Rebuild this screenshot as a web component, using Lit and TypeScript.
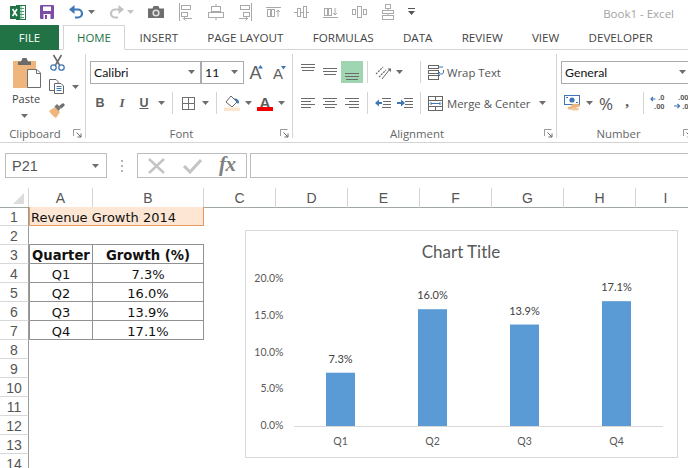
import { LitElement, html, css, svg } from "lit";
import { customElement } from "lit/decorators.js";

const ic = (w: number, h: number, c: unknown) =>
  html`<svg class="ic" width=${w} height=${h} viewBox="0 0 ${w} ${h}">${c}</svg>`;

const G = "#6b6b6b";
const L = "#a9a9a9";
const B = "#3f77b5";

const caret = html`<svg class="ic" width="7" height="4" viewBox="0 0 7 4"><path d="M0 0H7L3.5 4Z" fill="#6e6e6e"/></svg>`;
const caretL = html`<svg class="ic" width="7" height="4" viewBox="0 0 7 4"><path d="M0 0H7L3.5 4Z" fill="#c4c4c4"/></svg>`;

const lines = (rows: [number, number][], col = G) =>
  rows.map(([x, y], i) => svg`<path d="M${x} ${i * 3 + 0.5}H${y}" stroke=${col}/>`);

const launcher = ic(9, 9, svg`<path d="M.5 7V.5H7.5" fill="none" stroke="#9a9a9a"/><path d="M3.5 3.5L8 8M8 4.5V8H4.5" fill="none" stroke="#666"/>`);

const Icons = {
  excel: ic(16, 15, svg`<rect x="6.5" y=".5" width="9" height="14" fill="#fff" stroke="#217346"/><path d="M8 3.5h6M8 6.5h6M8 9.5h6M8 12.5h6M11 1v13" stroke="#4d9a72"/><rect x="0" y="1" width="10" height="13" fill="#217346"/><path d="M2.6 4l4.4 7M7 4l-4.4 7" stroke="#fff" stroke-width="1.6"/>`),
  save: ic(14, 14, svg`<rect width="14" height="14" rx="1" fill="#7f4ca5"/><rect x="3" y="1.5" width="8" height="4.5" fill="#fff"/><rect x="3.5" y="9" width="7" height="5" fill="#fff"/><rect x="5" y="10" width="2" height="4" fill="#7f4ca5"/>`),
  undo: ic(15, 14, svg`<path d="M4 4.5H9a4 4 0 0 1 0 8H6" fill="none" stroke=${B} stroke-width="2.2"/><path d="M5.5 0V9L0 4.5Z" fill=${B}/>`),
  redo: ic(15, 14, svg`<path d="M11 4.5H6a4 4 0 0 0 0 8H9" fill="none" stroke="#c2c2c2" stroke-width="2.2"/><path d="M9.5 0V9L15 4.5Z" fill="#c2c2c2"/>`),
  camera: ic(16, 12, svg`<path d="M0 2.5H4.5L5.5 0H10.5L11.5 2.5H16V12H0Z" fill="#6e6e6e"/><circle cx="8" cy="7" r="3.6" fill="#dfdfdf"/><circle cx="8" cy="7" r="2" fill="#6e6e6e"/>`),
  alignL: ic(14, 18, svg`<path d="M.5 0V18" stroke=${L}/><rect x="2.5" y="2.5" width="9" height="4" fill="none" stroke=${L}/><rect x="2.5" y="9.5" width="6" height="4" fill="none" stroke=${L}/><path d="M13 15.5H4M6.5 13.5l-2 2 2 2" fill="none" stroke=${L}/>`),
  alignC: ic(16, 16, svg`<path d="M8 0V3M8 7.5v1M8 13v3" stroke=${L}/><rect x="3.5" y="2.5" width="9" height="5" fill="none" stroke=${L}/><rect x=".5" y="8.5" width="15" height="5" fill="none" stroke=${L}/>`),
  alignR: ic(14, 18, svg`<path d="M13.5 0V18" stroke=${L}/><rect x="2.5" y="2.5" width="9" height="4" fill="none" stroke=${L}/><rect x="5.5" y="9.5" width="6" height="4" fill="none" stroke=${L}/><path d="M1 15.5H10M7.5 13.5l2 2-2 2" fill="none" stroke=${L}/>`),
  alignT: ic(15, 11, svg`<path d="M0 .5H15" stroke=${L}/><rect x="1.5" y="2.5" width="3" height="7" fill="none" stroke=${L}/><rect x="5.5" y="2.5" width="3" height="7" fill="none" stroke=${L}/><path d="M12 10V3M10 5l2-2 2 2" fill="none" stroke=${L}/>`),
  alignM: ic(15, 12, svg`<path d="M0 6.5H3M7 6.5H9M13 6.5H15" stroke=${L}/><rect x="3.5" y="2.5" width="3" height="8" fill="none" stroke=${L}/><rect x="9.5" y=".5" width="3" height="11" fill="none" stroke=${L}/>`),
  alignB: ic(15, 11, svg`<path d="M0 10.5H15" stroke=${L}/><rect x="1.5" y="1.5" width="3" height="7" fill="none" stroke=${L}/><rect x="5.5" y="1.5" width="3" height="7" fill="none" stroke=${L}/><path d="M12 1V8M10 6l2 2 2-2" fill="none" stroke=${L}/>`),
  distH: ic(15, 12, svg`<rect x=".5" y="3.5" width="3" height="5" fill="none" stroke=${L}/><rect x="5.5" y=".5" width="4" height="11" fill="none" stroke=${L}/><rect x="11.5" y="3.5" width="3" height="5" fill="none" stroke=${L}/>`),
  distV: ic(12, 16, svg`<rect x="3.5" y=".5" width="5" height="4" fill="none" stroke=${L}/><rect x=".5" y="6.5" width="11" height="3" fill="none" stroke=${L}/><rect x=".5" y="11.5" width="11" height="4" fill="none" stroke=${L}/><path d="M6 4.5v2M6 9.5v2" stroke=${L}/>`),
  qat: ic(7, 8, svg`<path d="M0 .5H7" stroke="#555"/><path d="M0 3H7L3.5 7Z" fill="#555"/>`),
  paste: ic(28, 31, svg`<rect x="0" y="3" width="23" height="27" fill="#eeb57c"/><path d="M5 3.5H8L9.5 0H13.5L15 3.5H18V7H5Z" fill="#6b6b6b"/><path d="M14.5 11.5H24L27.5 15V29.5H14.5Z" fill="#fff" stroke="#6e6e6e"/><path d="M23.5 11.5V15.5H27.5" fill="none" stroke="#6e6e6e"/>`),
  cut: ic(15, 16, svg`<path d="M3.5 0L9.5 10M11.5 0L5.5 10" stroke="#666" stroke-width="1.5"/><circle cx="3.5" cy="12.5" r="2.7" fill="none" stroke=${B} stroke-width="1.3"/><circle cx="11.5" cy="12.5" r="2.7" fill="none" stroke=${B} stroke-width="1.3"/>`),
  copy: ic(15, 15, svg`<path d="M.5.5H7L9 2.5V11.5H.5Z" fill="#fff" stroke="#666"/><path d="M5.5 4.5H12L14.5 7V14.5H5.5Z" fill="#fff" stroke="#666"/><path d="M7.5 7.5H12.5M7.5 9.5H12.5M7.5 11.5H12.5" stroke=${B}/>`),
  painter: ic(16, 15, svg`<path d="M0 8L6 4L11 9L7 15C5 14 2 11 0 8Z" fill="#eeb57c"/><path d="M5.5 3.5L8 1 12 5 9.5 8Z" fill="#777"/><path d="M10 3L14 0 16 2 12.5 5.5Z" fill="#6b6b6b"/>`),
  grow: ic(13, 15, svg`<text x="-.5" y="14" class="gt lg">A</text><path d="M8 3.5L10.5 0 13 3.5Z" fill=${B}/>`),
  shrink: ic(13, 13, svg`<text x="0" y="12.5" class="gt">A</text><path d="M8 0H13L10.5 3.5Z" fill=${B}/>`),
  borders: ic(13, 13, svg`<rect x=".5" y=".5" width="12" height="12" fill="none" stroke="#6e6e6e"/><path d="M6.5 0V13M0 6.5H13" stroke="#6e6e6e"/>`),
  fill: ic(16, 16, svg`<path d="M7 1L13 7 8 12 2 7Z" fill="#fff" stroke="#666"/><path d="M10 3.5c3 0 5 1 5 4l-1 1.5-1-1.5Z" fill=${B}/><rect x="0" y="12.5" width="16" height="3.5" fill="#fbe5cf"/>`),
  color: ic(16, 15, svg`<text x="2.5" y="11.5" class="gt bold">A</text><rect y="11" width="16" height="4" fill="#f00000"/>`),
  lnV: ic(14, 8, lines([[0, 14], [0, 14], [1, 13]])),
  lnL: ic(14, 11, lines([[0, 14], [0, 10], [0, 14], [0, 10]])),
  lnC: ic(14, 11, lines([[0, 14], [2, 12], [0, 14], [2, 12]])),
  lnR: ic(14, 11, lines([[0, 14], [4, 14], [0, 14], [4, 14]])),
  orient: ic(17, 15, svg`<path d="M1 9L8 2M4 12L11 5" stroke="#6a6a6a" fill="none" stroke-width="1.2" stroke-dasharray="2 1"/><path d="M7 14L15 4" stroke="#666"/><path d="M12.5 3.5H16V7Z" fill="#666"/>`),
  indL: ic(16, 11, svg`<path d="M7 .5H16M8 3.5H16M8 6.5H16M7 9.5H16" stroke="#6a6a6a"/><path d="M7 5H3" stroke=${B} stroke-width="2"/><path d="M4 1.5V8.5L0 5Z" fill=${B}/>`),
  indR: ic(16, 11, svg`<path d="M7 .5H16M8 3.5H16M8 6.5H16M7 9.5H16" stroke="#6a6a6a"/><path d="M0 5H4" stroke=${B} stroke-width="2"/><path d="M4 1.5V8.5L8 5Z" fill=${B}/>`),
  wrap: ic(16, 15, svg`<rect x=".5" y=".5" width="10" height="3" fill="none" stroke="#666"/><path d="M11 2h4" stroke=${B}/><rect x=".5" y="5.5" width="10" height="3" fill="none" stroke="#666"/><rect x=".5" y="10.5" width="10" height="4" fill="none" stroke="#666"/><path d="M15.5 5v2a2 2 0 0 1-2 2H10M12 7L10 9l2 2" fill="none" stroke=${B}/>`),
  merge: ic(15, 15, svg`<rect x=".5" y=".5" width="14" height="14" fill="#fff" stroke="#666"/><path d="M0 4.5H15M0 10.5H15M7.5 0V4M7.5 11V15" stroke="#666"/><path d="M3 7.5H12M3.5 6L2 7.5 3.5 9M11.5 6L13 7.5 11.5 9" fill="none" stroke=${B}/>`),
  money: ic(17, 16, svg`<rect x=".5" y=".5" width="15" height="9" fill="#fff" stroke=${B}/><circle cx="8" cy="5" r="2.6" fill=${B}/><path d="M2 2.5h2M12 7.5h2" stroke=${B}/><ellipse cx="11.5" cy="10.5" rx="4.5" ry="1.7" fill="#eeb57c"/><ellipse cx="8" cy="13" rx="4.5" ry="1.7" fill="#eeb57c"/><ellipse cx="11" cy="14" rx="4" ry="1.5" fill="#f3c99b"/>`),
};

interface Row { a?: string; b?: string; kind?: string }

const ROWS: Row[] = [
  { a: "Revenue Growth 2014", kind: "title" },
  { kind: "gap" },
  { a: "Quarter", b: "Growth (%)", kind: "head" },
  { a: "Q1", b: "7.3%" },
  { a: "Q2", b: "16.0%" },
  { a: "Q3", b: "13.9%" },
  { a: "Q4", b: "17.1%" },
  ...Array.from({ length: 7 }, () => ({ kind: "none" })),
];
const COLS = ["A", "B", "C", "D", "E", "F", "G", "H", "I"];
const TABS = ["INSERT", "PAGE LAYOUT", "FORMULAS", "DATA", "REVIEW", "VIEW", "DEVELOPER"];
const DATA: [string, number, number][] = [["Q1", 7.3, 340.5], ["Q2", 16, 432.5], ["Q3", 13.9, 524.5], ["Q4", 17.1, 616.5]];
const TICKS = [0, 5, 10, 15, 20];

@customElement("app-root")
export class AppRoot extends LitElement {
  static styles = css`
    :host { display: block; width: 688px; height: 468px; overflow: hidden; background: #fff; font-family: "Open Sans", sans-serif; color: #444; position: relative; }
    * { box-sizing: border-box; }
    .ic { display: block; flex: none; overflow: visible; }
    .gt { font: 400 15px "Liberation Sans", sans-serif; fill: #5e5e5e; }
    .gt.lg { font-size: 18px; }
    .gt.bold { font-weight: 700; }

    .title { height: 25px; display: flex; align-items: center; padding-left: 3.5px; padding-bottom: 1px; overflow: hidden; }
    .slot { display: flex; align-items: center; justify-content: center; flex: none; }
    .s29 { width: 29px; } .s30 { width: 30px; } .s27 { width: 27px; } .s28 { width: 28px; } .s17 { width: 17px; }
    .pair { width: 40px; display: flex; align-items: center; padding-left: 7px; gap: 3.5px; flex: none; }
    .undo { padding-left: 7.5px; }
    .name { margin-left: auto; margin-right: 14px; margin-top: 2px; font-size: 11.5px; color: #a3a3a3; }

    .tabs { height: 25px; display: flex; border-bottom: 1px solid #d4d4d4; font-size: 11.65px; }
    .tab { height: 25px; display: flex; align-items: center; padding: 0 14.6px; white-space: nowrap; flex: none; }
    .file { width: 59px; height: 25px; background: #217346; color: #fff; justify-content: center; padding: 0; margin-right: 4px; font-size: 11.4px; }
    .home { width: 62px; padding: 0; justify-content: center; border: 1px solid #d4d4d4; border-bottom: 1px solid #fff; color: #217346; background: #fff; font-size: 11.4px; }

    .ribbon { height: 93px; display: flex; border-bottom: 1px solid #d4d4d4; padding-top: 4px; overflow: hidden; }
    .group { height: 84px; border-right: 1px solid #d4d4d4; display: flex; flex-direction: column; flex: none; }
    .g1 { width: 86px; } .g2 { width: 207px; } .g3 { width: 264px; } .g4 { width: 138px; border: 0; }
    .body { flex: 1; min-height: 0; display: flex; }
    .label { height: 16px; display: flex; align-items: center; font-size: 11.4px; color: #666; margin-bottom: -4px; position: relative; top: -1px; }
    .label span { flex: 1; text-align: center; }
    .launch { width: 15px; display: flex; justify-content: center; padding-right: 1px; }

    .paste { width: 49px; padding: 4px 0 0 13px; display: flex; flex-direction: column; }
    .pastetxt { font-size: 11px; margin-top: 2px; margin-left: -1px; line-height: 16px; color: #444; }
    .pastecaret { margin: 7px 0 0 8px; }
    .tools { display: flex; flex-direction: column; padding-top: 1px; gap: 9px; }
    .toolrow { display: flex; align-items: center; gap: 6px; height: 15px; }
    .toolcut { padding-left: 1px; }
    .copycaret { margin-left: 2px; }

    .rows { display: flex; flex-direction: column; gap: 9px; padding-top: 7px; }
    .row { display: flex; align-items: center; height: 22px; }
    .fontrows { padding-left: 4px; }
    .pull { margin-left: -1px; }
    .combo { height: 23px; border: 1px solid #ababab; display: flex; align-items: center; background: #fff; font-family: Lato, sans-serif; font-size: 12.3px; color: #111; justify-content: space-between; padding: 0 5px 0 3px; flex: none; }
    .cfont { width: 111px; }
    .csize { width: 43px; padding-right: 5px; }
    .cgen { width: 135px; margin-left: 4px; padding-right: 9px; }
    .sep { width: 1px; height: 22px; background: #d4d4d4; flex: none; }
    .fmt { font: 700 12.5px "Liberation Sans", sans-serif; color: #5e5e5e; }
    .it { font: italic 700 13px "Liberation Serif", serif; }
    .un { text-decoration: underline; }
    .w22 { width: 22px; } .w12 { width: 12px; } .w10 { width: 10px; }
    .m5 { margin-left: 5px; } .m2 { margin-left: 2px; } .m4 { margin-left: 4px; } .m1 { margin-left: 1px; }
    .m10 { margin-left: 10px; } .m16 { margin-left: 16px; } .m7 { margin-left: 7px; }
    .alg { padding-left: 4px; }
    .cellb { width: 22px; height: 22px; display: flex; justify-content: center; flex: none; }
    .at { align-items: flex-start; padding-top: 3px; }
    .am { align-items: center; }
    .ab { align-items: flex-end; padding-bottom: 2px; }
    .on { background: #9fd5b1; }
    .tx { font-size: 11.35px; color: #555; white-space: nowrap; }
    .act { display: flex; align-items: center; gap: 3px; }
    .mergegap { margin-left: 6px; }
    .numrow { padding-left: 7px; }
    .pct { font: 400 17px "Open Sans", sans-serif; color: #555; }
    .cm { font: 700 15px "Liberation Serif", serif; color: #555; margin-top: -4px; }
    .dec { display: grid; grid-template-columns: 6px auto; font: 700 7.5px/8.7px "Liberation Sans", sans-serif; color: #555; justify-items: end; width: 15px; }
    .dec svg { align-self: center; }
    .dec span { grid-column: 2; }
    .dec .wide { grid-column: 1 / 3; }
    .dec .lo { grid-column: 1; grid-row: 2; justify-self: start; }
    .dec .hi { grid-column: 1 / 3; grid-row: 1; }
    .dec .r2 { grid-row: 2; }

    .fx { display: flex; margin-top: 10px; height: 25px; }
    .namebox { width: 102px; margin-left: 5px; border: 1px solid #bdbdbd; display: flex; align-items: center; justify-content: space-between; padding: 0 7px 0 6px; font: 14.5px "Liberation Sans", sans-serif; color: #555; }
    .dots { width: 30px; display: flex; flex-direction: column; align-items: center; justify-content: center; gap: 3px; }
    .dots i { width: 2px; height: 2px; background: #b5b5b5; display: block; }
    .fbtns { width: 110px; border: 1px solid #bdbdbd; display: flex; align-items: center; padding-left: 9px; gap: 17px; }
    .fxt { font: italic 700 21px "Liberation Serif", serif; color: #808080; letter-spacing: -.5px; margin-top: -3px; }
    .finput { flex: 1; margin-left: 3px; border: 1px solid #bdbdbd; border-right: 0; }

    .sheet { margin-top: 10px; position: relative; }
    .grid { display: grid; grid-template-columns: 29px 64px 111px repeat(6, 72px) 60px; grid-auto-rows: 19px; font: 13px "DejaVu Sans", Verdana, sans-serif; color: #111; }
    .corner { height: 20px; display: flex; align-items: flex-end; justify-content: flex-end; padding: 0 4px 3px 0; border-bottom: 1px solid #9fa8a2; border-right: 1px solid #d4d4d4; }
    .ch { height: 20px; border-bottom: 1px solid #9fa8a2; border-right: 1px solid #d4d4d4; display: flex; align-items: center; justify-content: center; font: 14px "Liberation Sans", sans-serif; color: #555; }
    .ch:last-of-type { border-right: 0; }
    .hdrow { grid-row: 1; height: 20px; }
    .rh { grid-column: 1; border-right: 1px solid #9a9a9a; border-bottom: 1px solid #d8d8d8; display: flex; align-items: center; justify-content: center; padding-top: 1px; font: 14px "Liberation Sans", sans-serif; color: #555; }
    .c { display: flex; align-items: center; justify-content: center; white-space: nowrap; padding-top: 3px; }
    .bd { border-right: 1px solid #919191; border-bottom: 1px solid #919191; }
    .ca { border-left: 1px solid #919191; }
    .cg { border-bottom: 1px solid #919191; }
    .hd { font-weight: 700; font-size: 13.2px; }
    .cwide { grid-column: span 2; justify-content: flex-start; padding-left: 1px; background: #fde6d3; border: 1px solid #e89a5e; border-top: 0; }

    .chart { position: absolute; left: 245px; top: 42px; width: 433px; height: 228px; border: 1px solid #d9d9d9; background: #fff; }
    .chart svg { display: block; }
    .ct { font: 17px Lato, sans-serif; fill: #595959; }
    .ax { font: 10.5px Lato, sans-serif; fill: #595959; }
    .dl { font: 11px Lato, sans-serif; fill: #404040; }
  `;

  render() {
    const left = ic(6, 6, svg`<path d="M5.5 3H1M3 1L1 3l2 2" fill="none" stroke=${B} stroke-width="1.2"/>`);
    const right = ic(7, 6, svg`<path d="M0 3H5.5M3.5 1l2 2-2 2" fill="none" stroke=${B} stroke-width="1.2"/>`);
    return html`
      <div class="title">
        <div class="slot s29">${Icons.excel}</div>
        <div class="slot s29">${Icons.save}</div>
        <div class="pair undo">${Icons.undo}${caret}</div>
        <div class="pair">${Icons.redo}${caretL}</div>
        <div class="slot s29">${Icons.camera}</div>
        <div class="slot s30">${Icons.alignL}</div>
        <div class="slot s30">${Icons.alignC}</div>
        <div class="slot s29">${Icons.alignR}</div>
        <div class="slot s27">${Icons.alignT}</div>
        <div class="slot s30">${Icons.alignM}</div>
        <div class="slot s28">${Icons.alignB}</div>
        <div class="slot s29">${Icons.distH}</div>
        <div class="slot s29">${Icons.distV}</div>
        <div class="slot s17">${Icons.qat}</div>
        <div class="name">Book1 - Excel</div>
      </div>

      <div class="tabs">
        <div class="tab file">FILE</div>
        <div class="tab home">HOME</div>
        ${TABS.map((t) => html`<div class="tab">${t}</div>`)}
      </div>

      <div class="ribbon">
        <section class="group g1">
          <div class="body">
            <div class="paste">${Icons.paste}<div class="pastetxt">Paste</div><div class="pastecaret">${caret}</div></div>
            <div class="tools">
              <div class="toolrow toolcut">${Icons.cut}</div>
              <div class="toolrow">${Icons.copy}<span class="copycaret">${caret}</span></div>
              <div class="toolrow">${Icons.painter}</div>
            </div>
          </div>
          <div class="label"><span>Clipboard</span><div class="launch">${launcher}</div></div>
        </section>

        <section class="group g2">
          <div class="body">
            <div class="rows fontrows">
              <div class="row">
                <div class="combo cfont">Calibri ${caret}</div>
                <div class="combo csize">11 ${caret}</div>
                <div class="slot w22 m1">${Icons.grow}</div>
                <div class="slot w22 m1">${Icons.shrink}</div>
              </div>
              <div class="row pull">
                <div class="slot w22 fmt">B</div>
                <div class="slot w22 fmt it">I</div>
                <div class="slot w22 fmt un">U</div>
                <div class="slot w12">${caret}</div>
                <div class="sep m5"></div>
                <div class="slot w22 m4">${Icons.borders}</div>
                <div class="slot w12">${caret}</div>
                <div class="sep m5"></div>
                <div class="slot w22 m4">${Icons.fill}</div>
                <div class="slot w10">${caret}</div>
                <div class="slot w22 m1">${Icons.color}</div>
                <div class="slot w10">${caret}</div>
              </div>
            </div>
          </div>
          <div class="label"><span>Font</span><div class="launch">${launcher}</div></div>
        </section>

        <section class="group g3">
          <div class="body">
            <div class="rows alg">
              <div class="row">
                <div class="cellb at">${Icons.lnV}</div>
                <div class="cellb am">${Icons.lnV}</div>
                <div class="cellb on ab">${Icons.lnV}</div>
                <div class="sep m4"></div>
                <div class="slot w22 m4">${Icons.orient}</div>
                <div class="slot w10">${caret}</div>
                <div class="sep m16"></div>
                <div class="act m7">${Icons.wrap}<span class="tx">Wrap Text</span></div>
              </div>
              <div class="row">
                <div class="slot w22">${Icons.lnL}</div>
                <div class="slot w22">${Icons.lnC}</div>
                <div class="slot w22">${Icons.lnR}</div>
                <div class="sep m4"></div>
                <div class="slot w22 m4">${Icons.indL}</div>
                <div class="slot w22">${Icons.indR}</div>
                <div class="sep m4"></div>
                <div class="act m7">${Icons.merge}<span class="tx m1">Merge &amp; Center</span><span class="mergegap">${caret}</span></div>
              </div>
            </div>
          </div>
          <div class="label"><span>Alignment</span><div class="launch">${launcher}</div></div>
        </section>

        <section class="group g4">
          <div class="body">
            <div class="rows">
              <div class="row"><div class="combo cgen">General ${caret}</div></div>
              <div class="row numrow">
                ${Icons.money}
                <div class="slot w12 m2">${caret}</div>
                <div class="slot w22 pct">%</div>
                <div class="slot w12 cm m4">,</div>
                <div class="sep m10"></div>
                <div class="slot w22 m2"><div class="dec">${left}<span>.0</span><span class="wide">.00</span></div></div>
                <div class="slot w22 m2"><div class="dec"><span class="hi">.00</span><div class="lo">${right}</div><span class="r2">.0</span></div></div>
              </div>
            </div>
          </div>
          <div class="label"><span>Number</span><div class="launch">${launcher}</div></div>
        </section>
      </div>

      <div class="fx">
        <div class="namebox">P21 ${caret}</div>
        <div class="dots"><i></i><i></i><i></i></div>
        <div class="fbtns">
          ${ic(19, 18, svg`<path d="M2 2L17 16M17 2L2 16" stroke="#c4c4c4" stroke-width="2.5"/>`)}
          ${ic(19, 16, svg`<path d="M1 8L7 14 18 2" fill="none" stroke="#c4c4c4" stroke-width="3"/>`)}
          <span class="fxt">fx</span>
        </div>
        <div class="finput"></div>
      </div>

      <div class="sheet">
        <div class="grid">
          <div class="corner hdrow">${ic(11, 11, svg`<path d="M11 0V11H0Z" fill="#dcdcdc"/>`)}</div>
          ${COLS.map((c) => html`<div class="ch hdrow">${c}</div>`)}
          ${ROWS.map((r, i) => html`
            <div class="rh">${i + 1}</div>
            ${this.cells(r)}
          `)}
        </div>
        <div class="chart">${this.chart()}</div>
      </div>
    `;
  }

  private cells(r: Row) {
    if (r.kind === "title") return html`<div class="c cwide">${r.a}</div>`;
    if (r.kind === "gap") return html`<div class="c cg"></div><div class="c cg"></div>`;
    if (r.kind === "none") return html``;
    const cls = r.kind === "head" ? "hd" : "";
    return html`<div class="c bd ca ${cls}">${r.a}</div><div class="c bd ${cls}">${r.b}</div>`;
  }

  private chart() {
    const y0 = 426;
    const k = 7.3;
    return html`<svg width="431" height="226" viewBox="246 231 431 226">
      <text class="ct" x="461" y="258" text-anchor="middle">Chart Title</text>
      ${TICKS.map((t, i) => svg`<text class="ax" x="283.5" y=${429 - i * 36.75} text-anchor="end">${t.toFixed(1)}%</text>`)}
      ${DATA.map(([q, v, cx]) => svg`
        <rect x=${cx - 14.5} y=${y0 - v * k} width="29" height=${v * k} fill="#5b9bd5"/>
        <text class="dl" x=${cx} y=${y0 - v * k - 10} text-anchor="middle">${v.toFixed(1)}%</text>
        <text class="ax" x=${cx} y="445" text-anchor="middle">${q}</text>
      `)}
      <path d="M294 426.5H663" stroke="#d9d9d9"/>
    </svg>`;
  }
}
